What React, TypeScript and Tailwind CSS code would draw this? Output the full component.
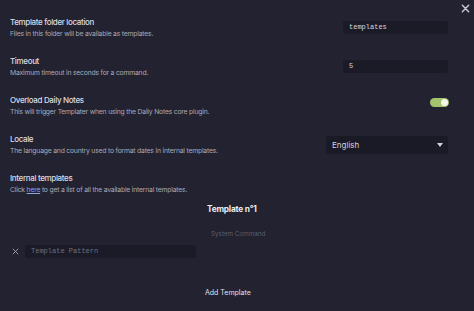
import React from 'react';

interface SettingRowProps {
  title: string;
  description: React.ReactNode;
  control?: React.ReactNode;
}

function SettingRow({ title, description, control }: SettingRowProps) {
  return (
    <div className="flex h-[39px] items-center justify-between">
      <div className="flex flex-col">
        <div className="text-[8px] font-medium leading-[11px] tracking-[-0.35px] text-[#dcdde2]">{title}</div>
        <div className="text-[6.8px] leading-[11px] tracking-[-0.2px] text-[#a9aab8]">{description}</div>
      </div>
      {control}
    </div>
  );
}

export default function App() {
  return (
    <div
      className="relative h-[311px] w-[474px] overflow-hidden bg-[#222230] px-[10px] pt-[8px]"
      style={{ fontFamily: 'Inter, "Noto Sans", sans-serif' }}
    >
      <button className="absolute right-[3px] top-[2px] flex h-[12px] w-[12px] items-center justify-center text-[#c8c9d4]">
        <svg width="9" height="9" viewBox="0 0 10 10" fill="none" stroke="currentColor" strokeWidth="1.6" strokeLinecap="round">
          <path d="M1.5 1.5l7 7M8.5 1.5l-7 7" />
        </svg>
      </button>

      <SettingRow
        title="Template folder location"
        description="Files in this folder will be available as templates."
        control={
          <div className="mr-[16px] flex h-[13px] w-[105px] items-center rounded-[2px] bg-[#1b1b28] px-[6px] font-['Liberation_Mono',monospace] text-[7px] text-[#d6d7de]">
            templates
          </div>
        }
      />
      <SettingRow
        title="Timeout"
        description="Maximum timeout in seconds for a command."
        control={
          <div className="mr-[16px] flex h-[13px] w-[105px] items-center rounded-[2px] bg-[#1b1b28] px-[6px] font-['Liberation_Mono',monospace] text-[7px] text-[#d6d7de]">
            5
          </div>
        }
      />
      <SettingRow
        title="Overload Daily Notes"
        description="This will trigger Templater when using the Daily Notes core plugin."
        control={
          <div className="mb-[6px] mr-[15px] flex h-[9px] w-[19px] items-center justify-end rounded-full bg-[#a3c46c] pr-[1px]">
            <div className="h-[7px] w-[7px] rounded-full bg-[#f4f8ea]" />
          </div>
        }
      />
      <SettingRow
        title="Locale"
        description="The language and country used to format dates in internal templates."
        control={
          <div className="mr-[16px] flex h-[18px] w-[122px] items-center justify-between rounded-[2px] bg-[#1a1a26] pl-[6px] pr-[5px] text-[8px] text-[#d2d3dc]">
            <span>English</span>
            <svg width="6" height="4" viewBox="0 0 6 4" fill="#d2d3dc">
              <path d="M0 0h6L3 4z" />
            </svg>
          </div>
        }
      />
      <SettingRow
        title="Internal templates"
        description={
          <>
            Click <span className="text-[#8aa4e6] underline">here</span> to get a list of all the available internal templates.
          </>
        }
      />

      <div className="flex flex-col">
        <div className="pl-[197px] text-[8.3px] font-bold leading-[12px] tracking-[-0.2px] text-[#ecedf2]">Template n°1</div>
        <div className="mt-[15px] pl-[201px] text-[6.3px] leading-[9px] text-[#5d5e6c]">System Command</div>
        <div className="mt-[6px] flex items-center gap-[6px] pl-[2px]">
          <svg width="7" height="7" viewBox="0 0 10 10" fill="none" stroke="#a4a5b2" strokeWidth="1.3" strokeLinecap="round">
            <path d="M1.5 1.5l7 7M8.5 1.5l-7 7" />
          </svg>
          <div className="flex h-[13px] w-[171px] items-center rounded-[2px] bg-[#1b1b28] px-[6px] font-['Liberation_Mono',monospace] text-[7px] text-[#6f707c]">
            Template Pattern
          </div>
        </div>
        <div className="mt-[30px] pl-[195px] text-[7px] leading-[10px] text-[#e0e1e8]">Add Template</div>
      </div>
    </div>
  );
}
